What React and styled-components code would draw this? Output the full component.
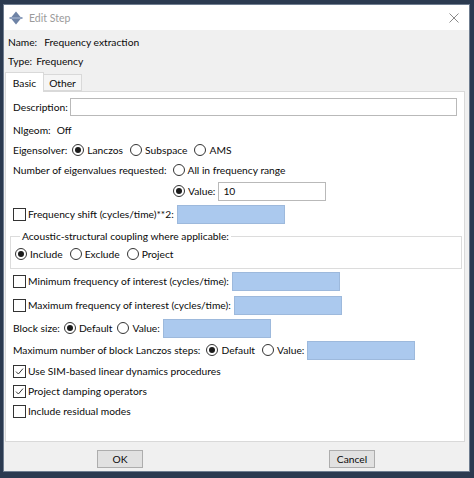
import React from 'react';
import styled, { createGlobalStyle } from 'styled-components';

const Global = createGlobalStyle`
  html, body {
    margin: 0;
    background: #2b3a50;
  }
  body {
    font-family: Lato, "Open Sans", Arial, sans-serif;
    font-size: 10.25px;
    color: #0a0a0a;
  }
`;

const Screen = styled.div`
  width: 474px;
  height: 478px;
  padding: 4px 4px 6px 3px;
  box-sizing: border-box;
`;

const Window = styled.div`
  width: 100%;
  height: 100%;
  background: #f0f0f0;
  display: flex;
  flex-direction: column;
  border: 1px solid #6f7d90;
  box-sizing: border-box;
  & > * {
    flex-shrink: 0;
  }
`;

const TitleBar = styled.div`
  height: 25px;
  background: #fff;
  display: flex;
  align-items: center;
  padding: 0 10px 0 5px;
  gap: 6px;
  color: #9b9b9b;
  font-size: 10.5px;
`;

const Title = styled.span`
  flex: 1;
`;

const Body = styled.div`
  flex: 1;
  display: flex;
  flex-direction: column;
  padding: 0 4px 0 1px;
  & > * {
    flex-shrink: 0;
  }
`;

const InfoRow = styled.div`
  height: 19px;
  display: flex;
  align-items: center;
  gap: ${(p) => p.$gap || 7}px;
  padding-left: 3px;
  margin-top: ${(p) => p.$mt || 0}px;
`;

const Tabs = styled.div`
  display: flex;
  align-items: flex-end;
  height: 20px;
  margin-top: 1px;
`;

const Tab = styled.div`
  height: ${(p) => (p.$active ? 20 : 17)}px;
  width: ${(p) => (p.$active ? 39 : 38)}px;
  box-sizing: border-box;
  display: flex;
  align-items: center;
  justify-content: center;
  background: ${(p) => (p.$active ? '#fff' : '#f5f5f5')};
  border: 1px solid #d9d9d9;
  border-bottom: ${(p) => (p.$active ? 'none' : '1px solid #d9d9d9')};
  border-left: ${(p) => (p.$active ? '1px solid #d9d9d9' : 'none')};
  position: relative;
  z-index: ${(p) => (p.$active ? 1 : 0)};
  margin-bottom: ${(p) => (p.$active ? -1 : 0)}px;
`;

const Panel = styled.div`
  height: 351px;
  box-sizing: border-box;
  background: #fff;
  border: 1px solid #d9d9d9;
  padding: 5px 7px 0 7px;
  display: flex;
  flex-direction: column;
  & > * {
    flex-shrink: 0;
  }
`;

const Row = styled.div`
  height: ${(p) => p.$h || 20}px;
  margin-top: ${(p) => p.$mt || 0}px;
  padding-left: ${(p) => p.$indent || 0}px;
  display: flex;
  align-items: center;
  white-space: nowrap;
`;

const Label = styled.span`
  margin-right: ${(p) => p.$mr || 5}px;
`;

const TextInput = styled.div`
  flex: ${(p) => (p.$w ? 'none' : 1)};
  width: ${(p) => (p.$w ? `${p.$w}px` : 'auto')};
  height: ${(p) => p.$h || 19}px;
  box-sizing: border-box;
  border: 1px solid #b9b9b9;
  background: #fff;
  display: flex;
  align-items: center;
  padding-left: 4px;
`;

const BlueField = styled.div`
  width: 108px;
  height: 19px;
  box-sizing: border-box;
  background: #abc9ee;
  border: 1px solid #9db9dc;
  margin-left: ${(p) => p.$ml ?? 3}px;
`;

const RadioWrap = styled.span`
  display: inline-flex;
  align-items: center;
  gap: 3px;
  margin-right: ${(p) => p.$mr || 7}px;
`;

const RadioCircle = styled.span`
  width: 12px;
  height: 12px;
  box-sizing: border-box;
  border-radius: 50%;
  border: 1px solid #333;
  background: #fff;
  display: inline-flex;
  align-items: center;
  justify-content: center;
  &::after {
    content: '';
    width: 6px;
    height: 6px;
    border-radius: 50%;
    background: ${(p) => (p.$on ? '#1b1b1b' : 'transparent')};
  }
`;

const Radio = ({ on, children, mr }) => (
  <RadioWrap $mr={mr}>
    <RadioCircle $on={on} />
    {children}
  </RadioWrap>
);

const CheckWrap = styled.span`
  display: inline-flex;
  align-items: center;
  gap: 2px;
`;

const Box = styled.span`
  width: 13px;
  height: 13px;
  box-sizing: border-box;
  border: 1px solid #333;
  background: #fff;
  display: inline-flex;
  align-items: center;
  justify-content: center;
`;

const Check = ({ on, children }) => (
  <CheckWrap>
    <Box>
      {on && (
        <svg width="9" height="9" viewBox="0 0 9 9">
          <path d="M1 4.6 L3.4 7 L8 1.6" fill="none" stroke="#333" strokeWidth="1" />
        </svg>
      )}
    </Box>
    {children}
  </CheckWrap>
);

const Group = styled.fieldset`
  margin: 6px 0 0 -3px;
  padding: 0 0 0 4px;
  height: 39px;
  box-sizing: border-box;
  border: 1px solid #dcdcdc;
  width: 452px;
  min-width: 0;
`;

const Legend = styled.legend`
  padding: 0 2px;
  margin-left: 5px;
`;

const Footer = styled.div`
  height: 30px;
  display: flex;
  align-items: center;
  padding-top: 4px;
  box-sizing: border-box;
`;

const Button = styled.div`
  width: 46px;
  height: 18px;
  box-sizing: border-box;
  background: #e1e1e1;
  border: 1px solid #adadad;
  display: flex;
  align-items: center;
  justify-content: center;
  margin-left: ${(p) => p.$ml}px;
`;

const AppIcon = () => (
  <svg width="14" height="14" viewBox="0 0 14 14">
    <path d="M7 0.5 L11.5 6 H2.5 Z" fill="#6e83a6" />
    <path d="M7 13.5 L11.5 8 H2.5 Z" fill="#6e83a6" />
    <rect x="0.5" y="6" width="13" height="2" fill="#8fa1bf" />
  </svg>
);

const CloseIcon = () => (
  <svg width="10" height="10" viewBox="0 0 10 10">
    <path d="M0.5 0.5 L9.5 9.5 M9.5 0.5 L0.5 9.5" stroke="#8a8a8a" strokeWidth="1" />
  </svg>
);

const App = () => (
  <Screen>
    <Global />
    <Window>
      <TitleBar>
        <AppIcon />
        <Title>Edit Step</Title>
        <CloseIcon />
      </TitleBar>
      <Body>
        <InfoRow $mt={2}>
          <span>Name:</span>
          <span>Frequency extraction</span>
        </InfoRow>
        <InfoRow $gap={4}>
          <span>Type:</span>
          <span>Frequency</span>
        </InfoRow>
        <Tabs>
          <Tab $active>Basic</Tab>
          <Tab>Other</Tab>
        </Tabs>
        <Panel>
          <Row $h={18} $mt={1}>
            <Label $mr={2}>Description:</Label>
            <TextInput $h={18} />
          </Row>
          <Row $mt={4}>
            <Label $mr={6}>Nlgeom:</Label>
            Off
          </Row>
          <Row>
            <Label>Eigensolver:</Label>
            <Radio on>Lanczos</Radio>
            <Radio>Subspace</Radio>
            <Radio>AMS</Radio>
          </Row>
          <Row>
            <Label $mr={6}>Number of eigenvalues requested:</Label>
            <Radio>All in frequency range</Radio>
          </Row>
          <Row $indent={160} $mt={1}>
            <Radio on mr={3}>Value:</Radio>
            <TextInput $w={108}>10</TextInput>
          </Row>
          <Row $mt={3}>
            <Check>Frequency shift (cycles/time)**2:</Check>
            <BlueField />
          </Row>
          <Group>
            <Legend>Acoustic-structural coupling where applicable:</Legend>
            <Row $mt={2}>
              <Radio on>Include</Radio>
              <Radio>Exclude</Radio>
              <Radio>Project</Radio>
            </Row>
          </Group>
          <Row $mt={2}>
            <Check>Minimum frequency of interest (cycles/time):</Check>
            <BlueField />
          </Row>
          <Row $mt={4}>
            <Check>Maximum frequency of interest (cycles/time):</Check>
            <BlueField />
          </Row>
          <Row $mt={3}>
            <Label $mr={4}>Block size:</Label>
            <Radio on mr={5}>Default</Radio>
            <Radio mr={3}>Value:</Radio>
            <BlueField $ml={0} />
          </Row>
          <Row $mt={2}>
            <Label $mr={6}>Maximum number of block Lanczos steps:</Label>
            <Radio on>Default</Radio>
            <Radio mr={3}>Value:</Radio>
            <BlueField $ml={0} />
          </Row>
          <Row $mt={1}>
            <Check on>Use SIM-based linear dynamics procedures</Check>
          </Row>
          <Row>
            <Check on>Project damping operators</Check>
          </Row>
          <Row>
            <Check>Include residual modes</Check>
          </Row>
        </Panel>
        <Footer>
          <Button $ml={92}>OK</Button>
          <Button $ml={186}>Cancel</Button>
        </Footer>
      </Body>
    </Window>
  </Screen>
);

export default App;
